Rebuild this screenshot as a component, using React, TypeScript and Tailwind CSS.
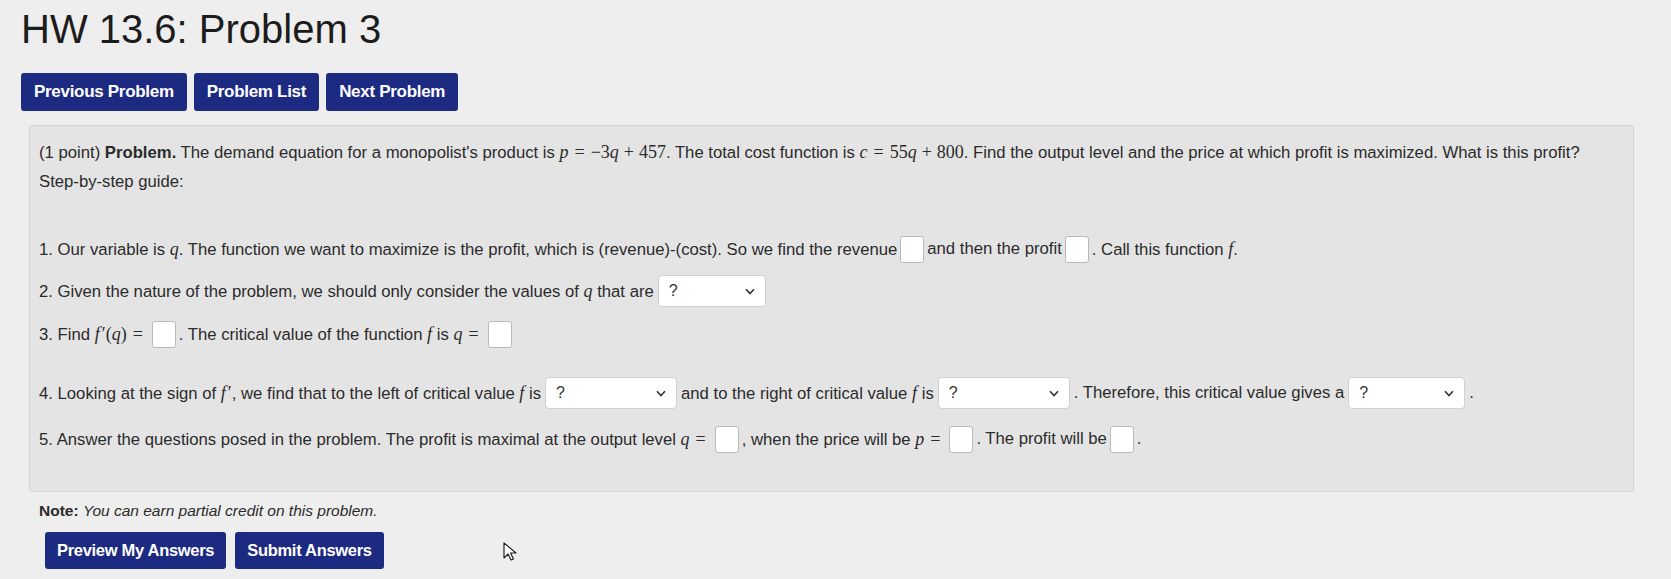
import React from "react";

const mathCls = "font-['Liberation_Serif',serif] text-[18px]";

const Box = () => (
  <span className="mx-[3px] inline-block h-[27px] w-[24px] rounded-[3px] border border-[#b9b9b9] bg-white align-middle" />
);

const Select = ({ w }: { w: string }) => (
  <span
    className={`mx-[4px] inline-flex h-[32px] items-center justify-between rounded-[4px] border border-[#d0d0d0] bg-white px-[10px] align-middle text-[16px] text-[#333] ${w}`}
  >
    <span>?</span>
    <svg width="10" height="7" viewBox="0 0 10 7" fill="none">
      <path d="M1 1.2 5 5.5 9 1.2" stroke="#333" strokeWidth="1.6" />
    </svg>
  </span>
);

const Eq = () => <span className="mx-[6px] not-italic">=</span>;
const Plus = () => <span className="mx-[5px] not-italic">+</span>;

const NavButton = ({ label }: { label: string }) => (
  <button className="h-[38px] rounded-[3px] bg-[#1d2a82] px-[13px] text-[17px] font-bold tracking-[-0.3px] text-white">
    {label}
  </button>
);

export default function App() {
  return (
    <div className="min-h-[579px] w-full bg-[#eeeeee] pl-[21px] pt-[7px] font-['Liberation_Sans',Arial,sans-serif] text-[#2b2b2b]">
      <h1 className="text-[40px] leading-[44px] text-[#1c1c1c]">HW 13.6: Problem 3</h1>

      <div className="mt-[22px] flex gap-[7px]">
        <NavButton label="Previous Problem" />
        <NavButton label="Problem List" />
        <NavButton label="Next Problem" />
      </div>

      {/* problem body */}
      <div className="mr-[37px] ml-[8px] mt-[14px] rounded-[3px] border border-[#d5d5d5] bg-[#e4e4e4] pb-[32px] pl-[9px] pt-[14px] text-[16.7px]">
        <p className="whitespace-nowrap leading-[24px]">
          (1 point) <b>Problem.</b> The demand equation for a monopolist's product is{" "}
          <span className={mathCls}>
            <i>p</i>
            <Eq />−3<i>q</i>
            <Plus />
            457
          </span>
          . The total cost function is{" "}
          <span className={mathCls}>
            <i>c</i>
            <Eq />
            55<i>q</i>
            <Plus />
            800
          </span>
          . Find the output level and the price at which profit is maximized. What is this profit?
        </p>
        <p className="mt-[5px] leading-[24px]">Step-by-step guide:</p>

        <div className="mt-[35px] flex flex-col">
          <div className="flex h-[40px] items-center whitespace-nowrap">
            <span>
              1. Our variable is <i className={mathCls}>q</i>. The function we want to maximize is the profit,
              which is (revenue)-(cost). So we find the revenue
            </span>
            <Box />
            <span>and then the profit</span>
            <Box />
            <span>
              . Call this function <i className={mathCls}>f</i>.
            </span>
          </div>
          <div className="mt-[2px] flex h-[40px] items-center whitespace-nowrap">
            <span>
              2. Given the nature of the problem, we should only consider the values of{" "}
              <i className={mathCls}>q</i> that are
            </span>
            <Select w="w-[108px]" />
          </div>
          <div className="mt-[3px] flex h-[40px] items-center whitespace-nowrap">
            <span>
              3. Find{" "}
              <span className={mathCls}>
                <i>f</i>
                <span className="ml-[2px]">′</span>(<i>q</i>)
                <Eq />
              </span>
            </span>
            <Box />
            <span>
              . The critical value of the function <i className={mathCls}>f</i> is{" "}
              <span className={mathCls}>
                <i>q</i>
                <Eq />
              </span>
            </span>
            <Box />
          </div>
          <div className="mt-[19px] flex h-[40px] items-center whitespace-nowrap">
            <span>
              4. Looking at the sign of{" "}
              <span className={mathCls}>
                <i>f</i>
                <span className="ml-[2px]">′</span>
              </span>
              , we find that to the left of critical value <i className={mathCls}>f</i> is
            </span>
            <Select w="w-[132px]" />
            <span>
              and to the right of critical value <i className={mathCls}>f</i> is
            </span>
            <Select w="w-[132px]" />
            <span>. Therefore, this critical value gives a</span>
            <Select w="w-[117px]" />
            <span>.</span>
          </div>
          <div className="mt-[6px] flex h-[40px] items-center whitespace-nowrap">
            <span>
              5. Answer the questions posed in the problem. The profit is maximal at the output level{" "}
              <span className={mathCls}>
                <i>q</i>
                <Eq />
              </span>
            </span>
            <Box />
            <span>
              , when the price will be{" "}
              <span className={mathCls}>
                <i>p</i>
                <Eq />
              </span>
            </span>
            <Box />
            <span>. The profit will be</span>
            <Box />
            <span>.</span>
          </div>
        </div>
      </div>

      <p className="ml-[18px] mt-[7px] text-[15.5px] leading-[24px]">
        <b>Note:</b> <i>You can earn partial credit on this problem.</i>
      </p>

      <div className="ml-[24px] mt-[9px] flex items-center gap-[9px]">
        <button className="h-[37px] rounded-[3px] bg-[#1d2a82] px-[12px] text-[16.5px] font-bold tracking-[-0.3px] text-white">
          Preview My Answers
        </button>
        <button className="h-[37px] rounded-[3px] bg-[#1d2a82] px-[12px] text-[16.5px] font-bold tracking-[-0.3px] text-white">
          Submit Answers
        </button>
        <svg className="ml-[110px] mt-[2px]" width="14" height="20" viewBox="0 0 14 20">
          <path d="M1 1v15l4-4 3 6 2.5-1-3-6h5.5z" fill="white" stroke="#222" strokeWidth="1.2" strokeLinejoin="round" />
        </svg>
      </div>
    </div>
  );
}
